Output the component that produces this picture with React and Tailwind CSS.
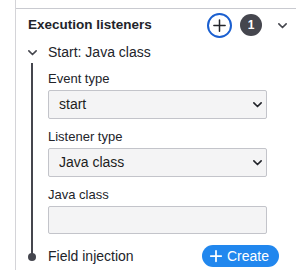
const Chevron = ({ className }) => (
    <svg viewBox="0 0 16 16" className={className} fill="none" stroke="currentColor" strokeWidth="2" strokeLinecap="round" strokeLinejoin="round">
        <path d="M3.5 6l4.5 4.5L12.5 6" />
    </svg>
)

function SelectField({ value }) {
    return (
        <div className="relative">
            <select
                defaultValue={value}
                className="h-[29px] w-full appearance-none rounded-[2px] border border-[#c3c4ca] bg-[#f4f4f5] pl-[10px] text-[14px] text-[#1c1d22] outline-none"
            >
                <option>{value}</option>
            </select>
            <Chevron className="pointer-events-none absolute right-[3px] top-[8px] h-[13px] w-[13px] text-[#22242a]" />
        </div>
    )
}

export default function App() {
    return (
        <div
            className="flex h-[270px] w-[296px] overflow-hidden bg-white text-[#22242a]"
            style={{ fontFamily: '"Liberation Sans", Arial, sans-serif' }}
        >
            <div className="w-[15px] shrink-0" />
            <div className="flex flex-1 flex-col border-l border-[#d4d4d8]">
                <div className="h-[9px] shrink-0 border-b border-[#c9cad0]" />

                <div className="flex h-[32px] items-center pl-[12px] pr-[7px]">
                    <h2 className="text-[13.5px] font-bold">Execution listeners</h2>
                    <button className="ml-auto flex h-[25px] w-[25px] items-center justify-center rounded-full border-2 border-[#1a5fd0]">
                        <svg viewBox="0 0 16 16" className="h-[15px] w-[15px]" fill="none" stroke="#22242a" strokeWidth="1.6" strokeLinecap="round">
                            <path d="M8 2v12M2 8h12" />
                        </svg>
                    </button>
                    <span className="ml-[8px] flex h-[22px] w-[22px] items-center justify-center rounded-full bg-[#45464e] text-[12px] font-bold text-white">
                        1
                    </span>
                    <Chevron className="ml-[14px] h-[13px] w-[13px] text-[#45464e]" />
                </div>

                <div className="flex h-[22px] items-center pl-[10px]">
                    <Chevron className="h-[13px] w-[13px] text-[#45464e]" />
                    <span className="ml-[9px] text-[14px]">Start: Java class</span>
                </div>

                <div className="flex flex-1">
                    <div className="flex w-[32px] shrink-0 flex-col items-center pb-[9px]">
                        <div className="w-[2px] flex-1 bg-[#45464e]" />
                        <div className="-mt-[2px] h-[8px] w-[8px] rounded-full bg-[#45464e]" />
                    </div>
                    <div className="flex flex-1 flex-col pr-[17px] pt-[6px]">
                        <div className="flex flex-col pr-[12px]">
                            <label className="text-[13px] leading-[20px]">Event type</label>
                            <div className="mt-[1px]">
                                <SelectField value="start" />
                            </div>
                            <label className="mt-[8px] text-[13px] leading-[20px]">Listener type</label>
                            <div className="mt-[1px]">
                                <SelectField value="Java class" />
                            </div>
                            <label className="mt-[8px] text-[13px] leading-[20px]">Java class</label>
                            <input className="mt-[1px] h-[28px] w-full rounded-[2px] border border-[#c3c4ca] bg-[#f4f4f5] outline-none" />
                        </div>
                        <div className="mt-[11px] flex h-[22px] items-center">
                            <span className="text-[14px]">Field injection</span>
                            <button className="ml-auto flex h-[22px] items-center gap-[4px] rounded-full bg-[#2187ee] pl-[7px] pr-[10px] text-[14px] text-white">
                                <svg viewBox="0 0 16 16" className="h-[14px] w-[14px]" fill="none" stroke="white" strokeWidth="2" strokeLinecap="round">
                                    <path d="M8 2v12M2 8h12" />
                                </svg>
                                Create
                            </button>
                        </div>
                    </div>
                </div>
            </div>
        </div>
    )
}
